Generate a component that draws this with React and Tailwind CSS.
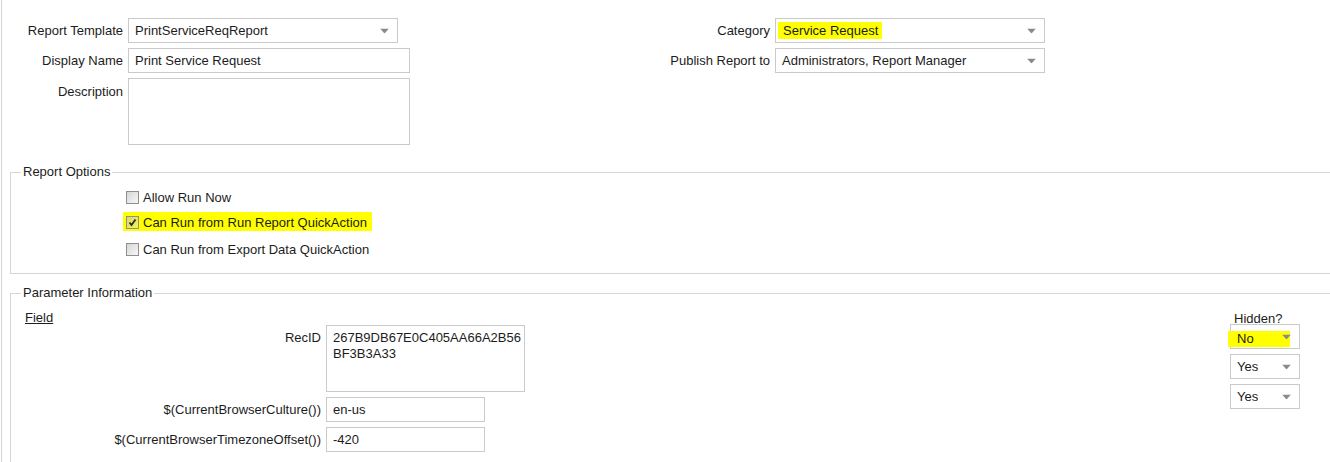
import React from "react";

function Arrow() {
  return (
    <svg
      className="absolute right-[8px] top-1/2 -translate-y-1/2"
      width="9"
      height="5"
      viewBox="0 0 9 5"
    >
      <polygon points="0,0 9,0 4.5,5" fill="#8a8a8a" />
    </svg>
  );
}

function Select({ w, children }) {
  return (
    <div
      className={`relative flex h-[25px] items-center border border-[#cacaca] bg-white pl-[6px] ${w}`}
    >
      {children}
      <Arrow />
    </div>
  );
}

function Input({ w, children }) {
  return (
    <div className={`flex h-[25px] items-center border border-[#cacaca] bg-white pl-[6px] ${w}`}>
      {children}
    </div>
  );
}

function Checkbox({ checked }) {
  return (
    <div
      className={`relative h-[13px] w-[13px] shrink-0 border border-[#8f8f8f] ${
        checked
          ? "bg-linear-to-br from-[#d8d86a] to-[#f2f25a]"
          : "bg-linear-to-br from-[#d6d6d6] to-[#f7f7f7]"
      }`}
    >
      {checked && (
        <svg className="absolute left-[1px] top-[1px]" width="9" height="9" viewBox="0 0 9 9">
          <path d="M1.5 4.5 L3.5 7 L7.5 1.5" stroke="#2a2a2a" strokeWidth="1.8" fill="none" />
        </svg>
      )}
    </div>
  );
}

export default function App() {
  return (
    <div className="h-[462px] w-[1330px] overflow-hidden bg-white font-['Liberation_Sans',Arial,sans-serif] text-[13px] leading-[15px] text-[#1c1c1c]">
      <div className="ml-px h-full border-l border-[#d6d6d6]">
        {/* Top section */}
        <div className="flex pt-[18px]">
          <div className="grid w-[648px] grid-cols-[121px_auto] content-start gap-x-[5px] gap-y-[5px]">
            <div className="flex h-[25px] items-center justify-end">Report Template</div>
            <Select w="w-[270px]">PrintServiceReqReport</Select>
            <div className="flex h-[25px] items-center justify-end">Display Name</div>
            <Input w="w-[282px]">Print Service Request</Input>
            <div className="pt-[6px] text-right">Description</div>
            <div className="h-[67px] w-[282px] border border-[#cacaca] bg-white" />
          </div>
          <div className="grid grid-cols-[120px_auto] content-start gap-x-[5px] gap-y-[5px]">
            <div className="flex h-[25px] items-center justify-end">Category</div>
            <Select w="w-[270px]">
              <span className="-ml-[4px] flex h-[17px] items-center bg-[#ffff00] pl-[5px] pr-[4px]">
                Service Request
              </span>
            </Select>
            <div className="flex h-[25px] items-center justify-end">Publish Report to</div>
            <Select w="w-[270px]">Administrators, Report Manager</Select>
          </div>
        </div>

        {/* Report Options */}
        <fieldset className="ml-[8px] mr-[-20px] mt-[19px] border border-[#d6d6d6] pb-[11px] pl-[10px] pt-0">
          <legend className="px-[2px] leading-[16px]">Report Options</legend>
          <div className="flex flex-col pt-[4px]">
            <div className="ml-[105px] flex h-[26px] items-center gap-[4px]">
              <Checkbox />
              <span>Allow Run Now</span>
            </div>
            <div className="ml-[102px] flex h-[26px] items-start">
              <span className="mt-[2px] flex h-[19px] items-center gap-[4px] bg-[#ffff00] pl-[3px] pr-[5px] pt-[2px]">
                <Checkbox checked />
                <span>Can Run from Run Report QuickAction</span>
              </span>
            </div>
            <div className="ml-[105px] flex h-[26px] items-center gap-[4px]">
              <Checkbox />
              <span>Can Run from Export Data QuickAction</span>
            </div>
          </div>
        </fieldset>

        {/* Parameter Information */}
        <fieldset className="ml-[8px] mr-[-20px] mt-[11px] h-[200px] border border-[#d6d6d6] pl-[10px] pt-0">
          <legend className="px-[2px] leading-[16px]">Parameter Information</legend>
          <div className="flex">
            <div className="flex w-[504px] flex-col">
              <div className="pl-[4px] pt-[9px] leading-[15px]">
                <span className="underline">Field</span>
              </div>
              <div className="grid grid-cols-[300px_auto] gap-x-[5px]">
                <div className="pt-[5px] text-right">RecID</div>
                <div className="h-[67px] w-[199px] border border-[#cacaca] bg-white pl-[6px] pt-[4px] leading-[16px]">
                  267B9DB67E0C405AA66A2B56
                  <br />
                  BF3B3A33
                </div>
                <div className="mt-[5px] flex h-[25px] items-center justify-end">
                  $(CurrentBrowserCulture())
                </div>
                <div className="mt-[5px]">
                  <Input w="w-[159px]">en-us</Input>
                </div>
                <div className="mt-[5px] flex h-[25px] items-center justify-end">
                  $(CurrentBrowserTimezoneOffset())
                </div>
                <div className="mt-[5px]">
                  <Input w="w-[159px]">-420</Input>
                </div>
              </div>
            </div>
            <div className="ml-[705px] flex w-[70px] flex-col gap-[5px]">
              <div className="-mb-[7px] pl-[4px] pt-[11px] leading-[14px]">Hidden?</div>
              <Select w="w-[70px]">
                <span className="-ml-[9px] mt-[4px] flex h-[16px] w-[62px] items-center bg-[#ffff00] pl-[9px]">
                  No
                </span>
              </Select>
              <Select w="w-[70px]">Yes</Select>
              <Select w="w-[70px]">Yes</Select>
            </div>
          </div>
        </fieldset>
      </div>
    </div>
  );
}
